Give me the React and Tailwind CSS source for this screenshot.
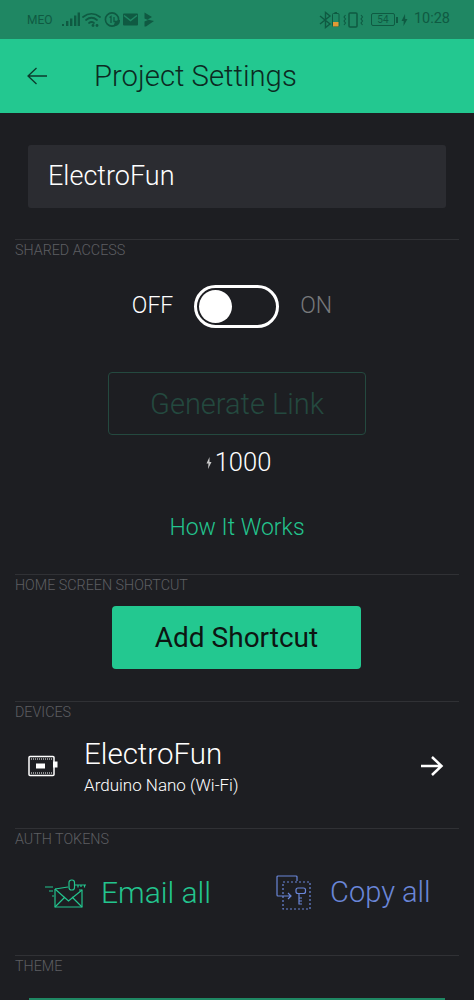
import React from "react";

const font = { fontFamily: '"Roboto", "Liberation Sans", sans-serif' };

function Section({ label, children, className = "" }) {
  return (
    <section className={className}>
      <div className="mx-[15px] border-t border-[#303135] pt-[1px] h-[22px] text-[14.3px] leading-[18px] font-light text-[#5e5f63] whitespace-nowrap">
        {label}
      </div>
      {children}
    </section>
  );
}

function StatusBar() {
  const c = "#0f5a42";
  return (
    <div className="h-[39px] bg-[#1f8763] flex items-center pl-[27px] pr-[24px] text-[#0f5a42]">
      <span className="text-[12px] leading-none w-[35px]">MEO</span>
      <svg width="96" height="18" viewBox="0 0 96 18" fill="none">
        <g fill={c}>
          <rect x="0" y="13" width="2" height="2" /><rect x="4" y="10" width="2.4" height="5" /><rect x="8" y="7.5" width="2.4" height="7.5" /><rect x="12" y="4.5" width="2.4" height="10.5" /><rect x="15.6" y="1.5" width="2.4" height="13.5" />
        </g>
        <g stroke={c} strokeWidth="1.7" fill="none" strokeLinecap="round">
          <path d="M21 6 Q29.5 -0.5 38 6" /><path d="M24 9 Q29.5 4.5 35 9" /><path d="M27 12 Q29.5 10 32 12" />
        </g>
        <circle cx="31" cy="14.5" r="1.4" fill={c} /><circle cx="35" cy="14.5" r="1.4" fill={c} />
        <circle cx="50" cy="8.5" r="6.6" stroke={c} strokeWidth="1.6" />
        <path d="M47.5 6.5l1.5-1v6.5M52 6v4.5h2" stroke={c} strokeWidth="1.3" />
        <path d="M52 15c0-4 2-6 6-6 0 4-2 6-6 6z" fill={c} />
        <rect x="61" y="2.5" width="15" height="12" rx="1" fill={c} />
        <path d="M62 4.5l6.500 5 6.500-5" stroke="#1f8763" strokeWidth="1.500" />
        <path d="M82.500 1.500l7.500 4.500-4.500 2.500 6.500 1.500-8 5.500h-1.500v-5l3.500-1.500-3.500-1.500z" fill={c} />
      </svg>
      <div className="flex-1" />
      <svg width="47" height="18" viewBox="0 0 47 18" fill="none" className="mr-[5px]">
        <path d="M1 5l10 8-4.500 3.500V1.500L11 5 1 13" stroke={c} strokeWidth="1.4" />
        <rect x="13.500" y="2.500" width="6.500" height="13" rx="1" stroke={c} strokeWidth="1" />
        <rect x="15.500" y="1" width="2.500" height="1.500" fill={c} />
        <rect x="14" y="11" width="5.500" height="4.500" fill="#e09a35" />
        <rect x="30" y="2" width="8" height="14" rx="1" stroke={c} strokeWidth="1.5" />
        <path d="M26.500 4l-1.500 2 1.500 2-1.500 2 1.500 2-1.500 2M42 4l1.500 2-1.500 2 1.500 2-1.500 2 1.500 2" stroke={c} strokeWidth="1.1" />
      </svg>
      <div className="w-[24px] h-[13px] border border-[#0f5a42] rounded-[2px] text-[10px] leading-[11px] text-center">54</div>
      <div className="w-[1.500px] h-[6px] bg-[#0f5a42] ml-[1.500px]" />
      <svg width="7" height="12" viewBox="0 0 7 12" className="ml-[3px] mr-[6px]"><path d="M4 0L0.500 7h2.200L2.500 12 6.500 5H4.200z" fill={c} /></svg>
      <span className="text-[14.500px] leading-none">10:28</span>
    </div>
  );
}

function EmailIcon() {
  return (
    <svg width="42" height="30" viewBox="0 0 42 30" fill="none" stroke="#23c48e" strokeWidth="1.2">
      <path d="M0 9h8M4 13h4M7 18h2" />
      <path d="M10 11v18h27V12h-3M10 11l13-2" />
      <path d="M10 11l13.500 12L37 12M10 29l10-10M37 29l-10-10" />
      <rect x="24" y="2" width="5.500" height="10" rx="2.500" />
      <path d="M29.500 7h11.500M33 7v2.500M36 7v2M39.500 7v2.500" />
    </svg>
  );
}

function CopyIcon() {
  return (
    <svg width="36" height="36" viewBox="0 0 36 36" fill="none" stroke="#6a86d8" strokeWidth="1.2">
      <path d="M21 6V2a1 1 0 0 0-1-1H2a1 1 0 0 0-1 1v18a1 1 0 0 0 1 1h5" />
      <path d="M7 21h8M12 18l3 3-3 3" />
      <rect x="7" y="7" width="27" height="27" strokeDasharray="2 2" />
      <rect x="20" y="13" width="9.500" height="5.500" rx="2" />
      <path d="M23 18.500V29h3M23 23h3M23 26h3" />
    </svg>
  );
}

function DeviceIcon() {
  return (
    <svg width="30" height="22" viewBox="0 0 30 22" fill="none">
      <rect x="1" y="1.500" width="25" height="19" rx="1" stroke="white" strokeWidth="1.500" />
      <path d="M3 4h21M3 18h21" stroke="white" strokeWidth="1" strokeDasharray="1 1" />
      <rect x="8" y="8.500" width="9" height="5" fill="white" />
      <rect x="25" y="6.500" width="4.500" height="6" fill="white" />
    </svg>
  );
}

export default function App() {
  return (
    <div className="w-[474px] h-[1000px] overflow-hidden bg-[#1d1e22]" style={font}>
      <StatusBar />
      <header className="h-[74px] bg-[#23c890] flex items-center pl-[27px] text-[#0c2a22]">
        <svg width="20" height="18" viewBox="0 0 20 18" fill="none" stroke="#0c3a2c" strokeWidth="1.300">
          <path d="M20 9H1M9.500 1L1 9l8.500 8" />
        </svg>
        <h1 className="ml-[47px] mt-[1px] text-[29.3px] font-light leading-none">Project Settings</h1>
      </header>

      <div className="mx-[28px] mt-[32px] h-[63px] bg-[#2b2c31] rounded-[3px] flex items-center pl-[20px] text-[27px] font-light text-white">
        ElectroFun
      </div>

      <Section label="SHARED ACCESS" className="mt-[31px]">
        <div className="h-[313px] pt-[23px]">
          <div className="flex items-center justify-center h-[44px] pr-[10px]">
            <span className="text-[23px] font-light text-white mr-[21px]">OFF</span>
            <div className="w-[85px] h-[43px] rounded-full border-[3px] border-white flex items-center pl-[2px]">
              <div className="w-[33px] h-[33px] rounded-full bg-white" />
            </div>
            <span className="text-[23px] font-light text-[#77787b] ml-[21px]">ON</span>
          </div>
          <div className="ml-[108px] mt-[44px] w-[258px] h-[63px] pt-[2px] rounded-[4px] border border-[#24493f] flex items-center justify-center text-[29px] font-light text-[#24493f]">
            Generate Link
          </div>
          <div className="flex items-center justify-center mt-[12px] h-[32px] pl-[3px] text-white">
            <svg width="6" height="12" viewBox="0 0 6 12" className="mr-[3px]"><path d="M3.500 0L0.500 6.500h2L2 12l3.500-7h-2z" fill="#c8c8c8" /></svg>
            <span className="text-[25.500px] font-light leading-none">1000</span>
          </div>
          <div className="mt-[33px] text-center text-[23px] font-light leading-[32px] text-[#23c48e]">How It Works</div>
        </div>
      </Section>

      <Section label="HOME SCREEN SHORTCUT">
        <div className="h-[105px] pt-[10px]">
          <div className="ml-[112px] w-[249px] h-[63px] rounded-[4px] bg-[#23c890] flex items-center justify-center text-[28px] text-[#0d1512]">
            Add Shortcut
          </div>
        </div>
      </Section>

      <Section label="DEVICES">
        <div className="h-[105px] flex items-center pl-[28px] pr-[30px] pb-[19px]">
          <DeviceIcon />
          <div className="ml-[26px] flex-1 text-white">
            <div className="text-[29.500px] font-light leading-[34px]">ElectroFun</div>
            <div className="mt-[3px] text-[17px] font-light leading-[22px]">Arduino Nano (Wi-Fi)</div>
          </div>
          <svg width="24" height="22" viewBox="0 0 24 22" fill="none" stroke="white" strokeWidth="2.500">
            <path d="M1 11h20M12 2l9.500 9-9.500 9" />
          </svg>
        </div>
      </Section>

      <Section label="AUTH TOKENS">
        <div className="h-[105px] flex items-center pb-[20px]">
          <div className="ml-[45px] flex items-center">
            <EmailIcon />
            <span className="ml-[14px] text-[30px] font-light text-[#23c48e]">Email all</span>
          </div>
          <div className="ml-[65px] flex items-center">
            <CopyIcon />
            <span className="ml-[18px] text-[29px] font-light text-[#6a86d8]">Copy all</span>
          </div>
        </div>
      </Section>

      <Section label="THEME">
        <div className="mx-[29px] mt-[21px] h-[4px] bg-[#1f8763]" />
      </Section>
    </div>
  );
}
